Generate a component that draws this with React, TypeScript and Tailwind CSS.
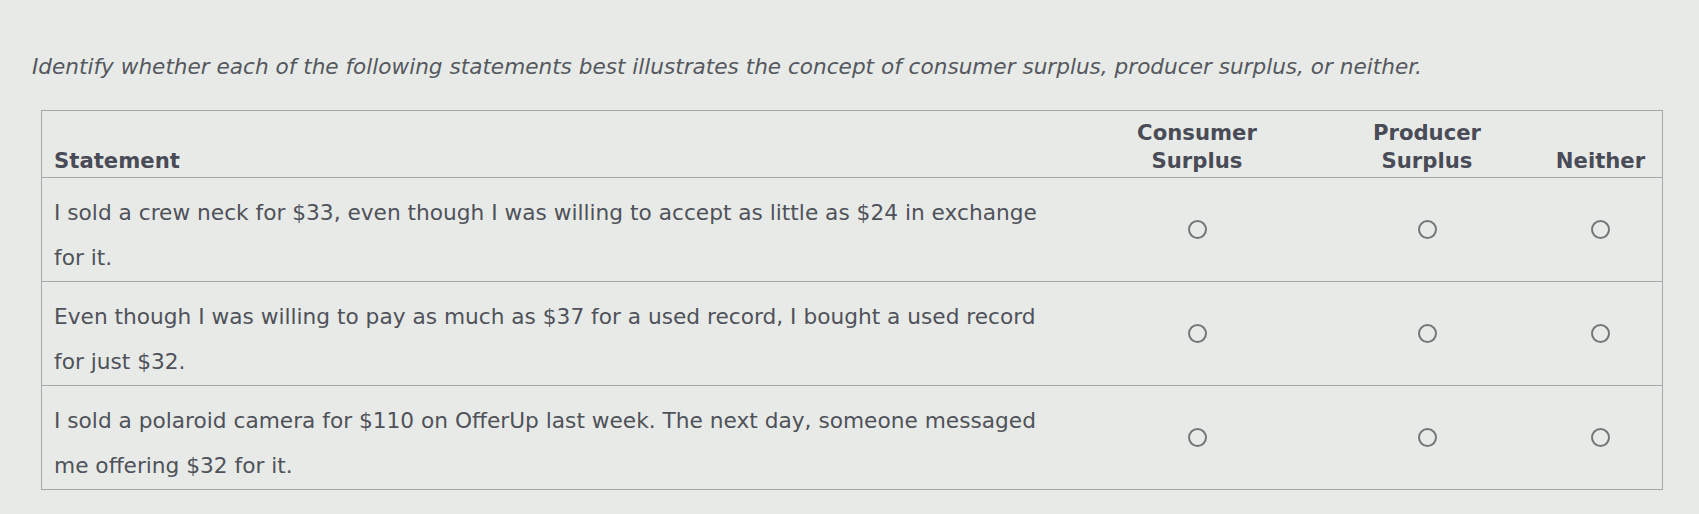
import React from "react";

const rows = [
  "I sold a crew neck for $33, even though I was willing to accept as little as $24 in exchange for it.",
  "Even though I was willing to pay as much as $37 for a used record, I bought a used record for just $32.",
  "I sold a polaroid camera for $110 on OfferUp last week. The next day, someone messaged me offering $32 for it.",
];

function Radio() {
  return (
    <div className="w-[19px] h-[19px] rounded-full border-2 border-[#74777a] bg-transparent" />
  );
}

export default function App() {
  return (
    <div className="w-[1699px] h-[514px] overflow-hidden bg-[#e8eae7] font-['DejaVu_Sans',sans-serif] text-[#4f525a]">
      <div className="pt-[54px] pl-[32px] text-[21.6px] leading-[26px] italic text-[#55585f]">
        Identify whether each of the following statements best illustrates the concept of consumer surplus, producer surplus, or neither.
      </div>
      <div className="mt-[30px] ml-[41px] w-[1622px] border border-[#a6a9aa]">
        <div className="grid grid-cols-[1037px_236px_224px_123px] h-[66px] items-end pb-[2px] font-bold text-[21.2px] leading-[28px] text-[#494c57]">
          <div className="pl-[12px]">Statement</div>
          <div className="text-center">Consumer<br />Surplus</div>
          <div className="text-center">Producer<br />Surplus</div>
          <div className="text-center">Neither</div>
        </div>
        {rows.map((r, i) => (
          <div key={i} className="grid grid-cols-[1037px_236px_224px_123px] border-t border-[#a6a9aa] h-[104px]">
            <div className="pl-[12px] pr-[25px] pt-[12px] text-[21.7px] leading-[45px]">{r}</div>
            <div className="flex items-center justify-center"><Radio /></div>
            <div className="flex items-center justify-center"><Radio /></div>
            <div className="flex items-center justify-center"><Radio /></div>
          </div>
        ))}
      </div>
    </div>
  );
}
